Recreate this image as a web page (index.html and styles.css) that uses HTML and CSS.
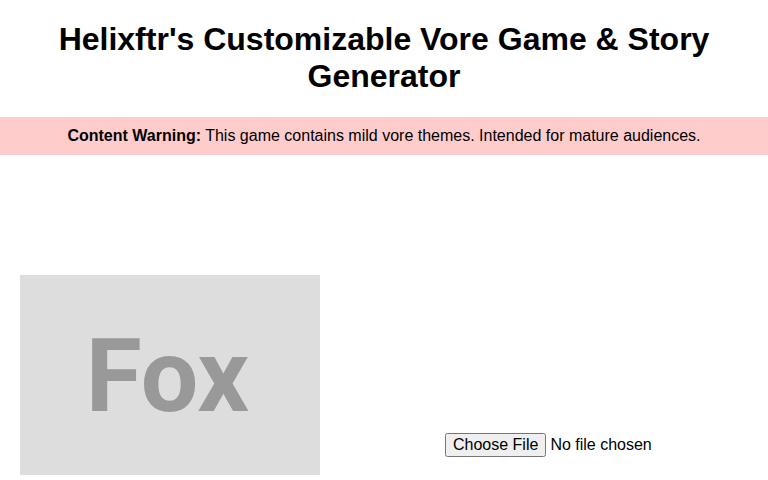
FILE: index.html
```html
<!DOCTYPE html>
<html lang="en">
<head>
<meta charset="utf-8">
<title>Helixftr's Customizable Vore Game &amp; Story Generator</title>
<link rel="stylesheet" href="styles.css">
</head>
<body>
  <h1 class="title">Helixftr's Customizable Vore Game &amp; Story Generator</h1>
  <div class="warning"><strong>Content Warning:</strong> This game contains mild vore themes. Intended for mature audiences.</div>
  <main class="stage">
    <div class="portrait"><span class="portrait-label">Fox</span></div>
    <div class="upload">
      <input type="file" class="upload-input">
    </div>
  </main>
</body>
</html>
```

FILE: styles.css
```css
body {
  margin: 0;
  font-family: "Liberation Sans", Arial, sans-serif;
  color: #000;
  background: #fff;
}

.title {
  font-size: 32px;
  font-weight: bold;
  text-align: center;
  margin: 21.44px 20px;
}

.warning {
  background: #ffcccc;
  padding: 10px;
  text-align: center;
  font-size: 16px;
}

.stage {
  display: flex;
  align-items: flex-end;
  padding: 120px 20px 0 20px;
}

.portrait {
  width: 300px;
  height: 200px;
  flex: none;
  background: #dddddd;
  display: flex;
  align-items: center;
  justify-content: center;
}

.portrait-label {
  font-family: Roboto, "Liberation Sans", sans-serif;
  font-size: 102px;
  font-weight: bold;
  color: #999999;
  line-height: 1;
  padding: 2px 5px 0 0;
}

.upload {
  flex: 1;
  display: flex;
  justify-content: flex-end;
  padding: 0 0 18px 0;
}

.upload-input {
  font-family: "Liberation Sans", Arial, sans-serif;
  font-size: 16px;
}
```
